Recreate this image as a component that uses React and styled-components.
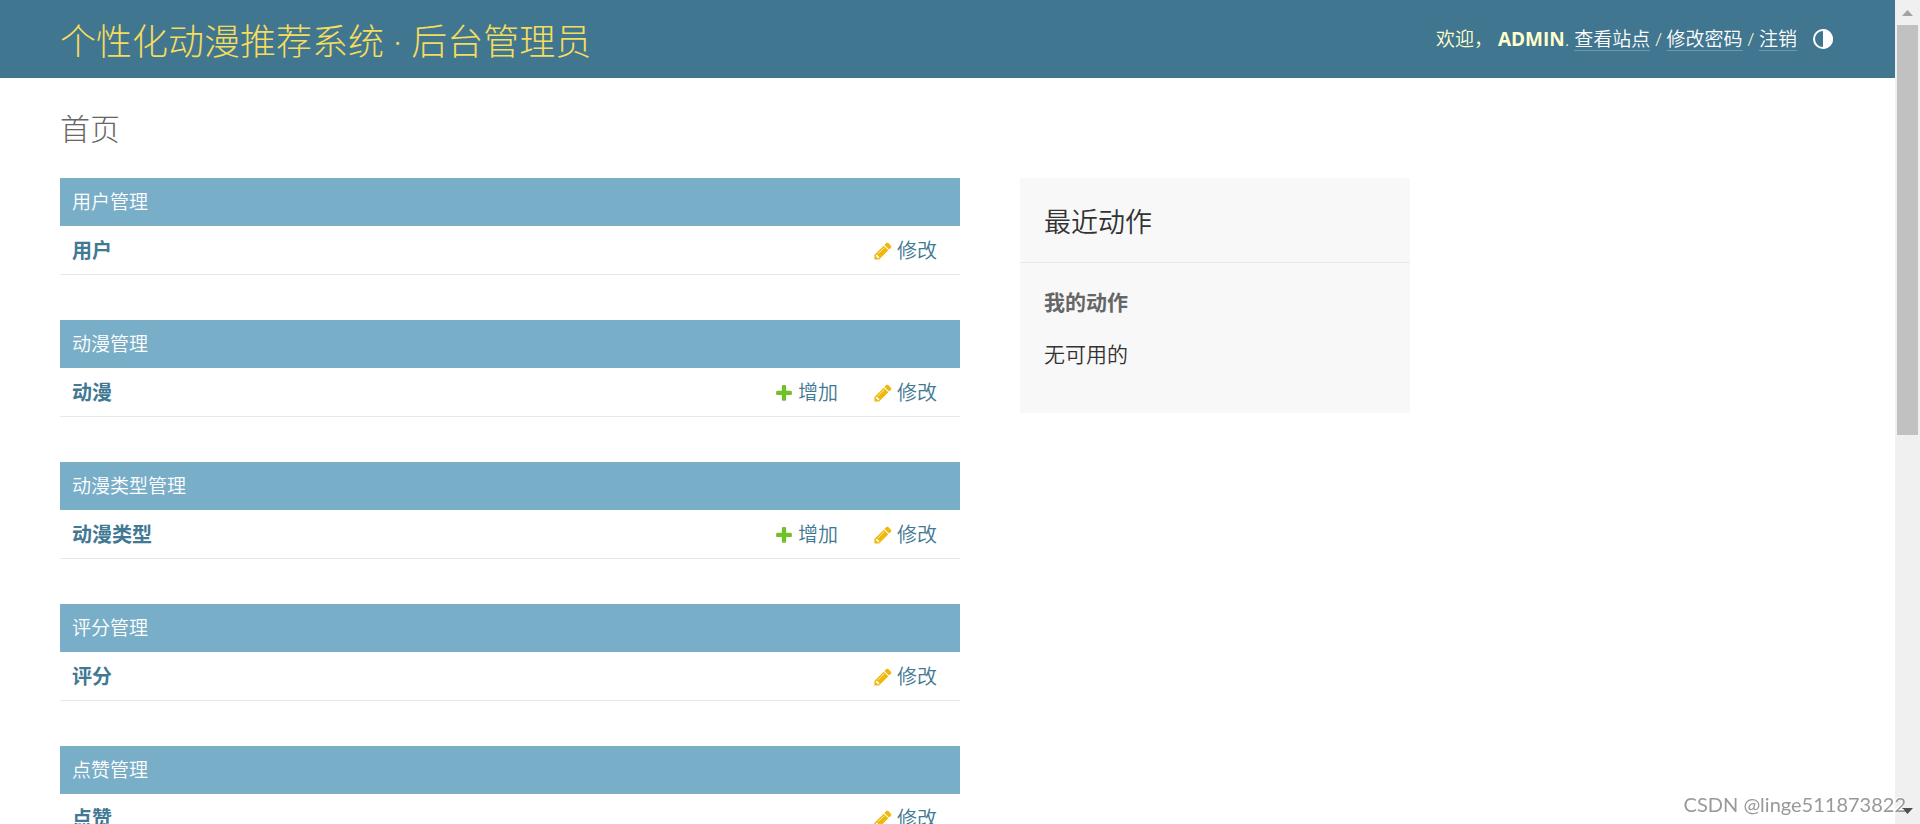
import { Fragment } from "react";
import styled, { createGlobalStyle } from "styled-components";

const modules = [
  { caption: "用户管理", model: "用户", canAdd: false },
  { caption: "动漫管理", model: "动漫", canAdd: true },
  { caption: "动漫类型管理", model: "动漫类型", canAdd: true },
  { caption: "评分管理", model: "评分", canAdd: false },
  { caption: "点赞管理", model: "点赞", canAdd: false },
];

const userLinks = ["查看站点", "修改密码", "注销"];

const AddIcon = () => (
  <Icon viewBox="0 0 1792 1792" aria-hidden="true">
    <path
      fill="#70bf2b"
      d="M1600 796v192q0 40-28 68t-68 28h-416v416q0 40-28 68t-68 28h-192q-40 0-68-28t-28-68v-416h-416q-40 0-68-28t-28-68v-192q0-40 28-68t68-28h416v-416q0-40 28-68t68-28h192q40 0 68 28t28 68v416h416q40 0 68 28t28 68z"
    />
  </Icon>
);

const ChangeIcon = () => (
  <Icon viewBox="0 0 1792 1792" aria-hidden="true">
    <path
      fill="#efb80b"
      d="M491 1536l91-91-235-235-91 91v107h128v128h107zm523-928q0-22-22-22-10 0-17 7l-542 542q-7 7-7 17 0 22 22 22 10 0 17-7l542-542q7-7 7-17zm-54-192l416 416-832 832h-416v-416zm683 96q0 53-37 90l-166 166-416-416 166-165q36-38 90-38 53 0 91 38l235 234q37 39 37 91z"
    />
  </Icon>
);

const ThemeIcon = () => (
  <svg width="24" height="24" viewBox="0 0 24 24" aria-hidden="true">
    <circle cx="12" cy="12" r="9" fill="none" stroke="#fff" strokeWidth="2" />
    <path d="M12 2a10 10 0 0 1 0 20z" fill="#fff" />
  </svg>
);

const Module = ({ caption, model, canAdd }) => (
  <ModuleTable>
    <caption>
      <a href="#">{caption}</a>
    </caption>
    <tbody>
      <tr>
        <th scope="row">
          <a href="#">{model}</a>
        </th>
        <td>
          {canAdd && (
            <ActionLink href="#">
              <AddIcon />
              增加
            </ActionLink>
          )}
        </td>
        <td>
          <ActionLink href="#">
            <ChangeIcon />
            修改
          </ActionLink>
        </td>
      </tr>
    </tbody>
  </ModuleTable>
);

const App = () => {
  return (
    <Window>
      <GlobalStyle />
      <Page>
        <Header>
          <SiteName href="#">个性化动漫推荐系统 · 后台管理员</SiteName>
          <UserTools>
            <div>
              欢迎， <strong>ADMIN</strong>.{" "}
              {userLinks.map((label, i) => (
                <Fragment key={label}>
                  {i > 0 && " / "}
                  <a href="#">{label}</a>
                </Fragment>
              ))}
            </div>
            <ThemeButton type="button" aria-label="切换主题">
              <ThemeIcon />
            </ThemeButton>
          </UserTools>
        </Header>
        <Content>
          <h1>首页</h1>
          <Columns>
            <Main>
              {modules.map((item) => (
                <Module key={item.caption} {...item} />
              ))}
            </Main>
            <Sidebar>
              <h2>最近动作</h2>
              <h3>我的动作</h3>
              <p>无可用的</p>
            </Sidebar>
          </Columns>
        </Content>
      </Page>
      <Scrollbar aria-hidden="true">
        <Arrow viewBox="0 0 25 25">
          <path d="M7 16h11l-5.500-6z" fill="#a3a3a3" />
        </Arrow>
        <Track>
          <Thumb />
        </Track>
        <Arrow viewBox="0 0 25 25">
          <path d="M7 9h11l-5.500 6z" fill="#505050" />
        </Arrow>
      </Scrollbar>
      <Watermark>CSDN @linge511873822</Watermark>
    </Window>
  );
};

export default App;

const GlobalStyle = createGlobalStyle`
  body {
    margin: 0;
    background: #fff;
    color: #333;
    font-family: "Open Sans", "Noto Sans CJK SC", sans-serif;
    font-weight: 350;
    font-size: 20px;
  }
  a {
    color: #417893;
    text-decoration: none;
  }
`;

const Window = styled.div`
  display: flex;
  height: 100vh;
  overflow: hidden;
`;

const Page = styled.div`
  flex: 1;
  overflow: hidden;
`;

const Header = styled.header`
  display: flex;
  align-items: center;
  justify-content: space-between;
  padding: 0 60px;
  background: #417690;
  color: #ffc;
`;

const SiteName = styled.a`
  padding: 18px 0 12px;
  color: #f5dd5d;
  font-size: 36px;
  font-weight: 300;
  line-height: 48px;
`;

const UserTools = styled.div`
  display: flex;
  align-items: center;
  gap: 14px;
  font-size: 19px;
  line-height: 24px;

  strong {
    font-weight: 700;
  }

  a {
    display: inline-block;
    color: #fff;
    line-height: 22px;
    border-bottom: 1px solid rgba(255, 255, 255, 0.25);
  }
`;

const ThemeButton = styled.button`
  display: flex;
  padding: 0;
  border: 0;
  background: transparent;
  cursor: pointer;
`;

const Content = styled.main`
  padding: 30px 60px;

  h1 {
    margin: 0 0 29px;
    color: #666;
    font-size: 30px;
    font-weight: 300;
    line-height: 41px;
  }
`;

const Columns = styled.div`
  display: flex;
  align-items: flex-start;
  gap: 60px;
`;

const Main = styled.div`
  flex: 0 1 900px;
`;

const ModuleTable = styled.table`
  width: 100%;
  margin-bottom: 45px;
  border-collapse: collapse;
  line-height: 24px;

  caption {
    padding: 12px;
    background: #79aec8;
    font-size: 19px;
    text-align: left;
  }

  caption a {
    color: #fff;
  }

  th,
  td {
    padding: 13px 12px 11px;
    border-bottom: 1px solid #e8e8e8;
    text-align: left;
    white-space: nowrap;
  }

  th {
    width: 100%;
    font-weight: 700;
  }
`;

const ActionLink = styled.a`
  display: flex;
  align-items: center;
  gap: 4px;
  padding-right: 11px;
`;

const Icon = styled.svg`
  width: 20px;
  height: 20px;
`;

const Sidebar = styled.aside`
  flex: 0 1 390px;
  background: #f8f8f8;

  h2 {
    margin: 0 0 24px;
    padding: 26px 24px 22px;
    border-bottom: 1px solid #e8e8e8;
    font-size: 27px;
    font-weight: 350;
    line-height: 36px;
  }

  h3,
  p {
    margin: 0 24px 21px;
    font-size: 21px;
    line-height: 31px;
  }

  h3 {
    color: #666;
    font-weight: 700;
  }

  p {
    margin-bottom: 0;
    padding-bottom: 43px;
  }
`;

const Scrollbar = styled.div`
  display: flex;
  flex-direction: column;
  width: 25px;
  background: #f0f0f0;
`;

const Arrow = styled.svg`
  width: 25px;
  height: 25px;
`;

const Track = styled.div`
  flex: 1;
  padding: 0 2px;
`;

const Thumb = styled.div`
  height: 53%;
  background: #c1c1c1;
`;

const Watermark = styled.div`
  position: fixed;
  right: 14px;
  bottom: 8px;
  color: #999;
  font-family: Lato, "Liberation Sans", sans-serif;
  font-size: 20px;
  font-weight: 400;
  line-height: 24px;
  text-shadow: -1px -1px 0 #fff;
`;
